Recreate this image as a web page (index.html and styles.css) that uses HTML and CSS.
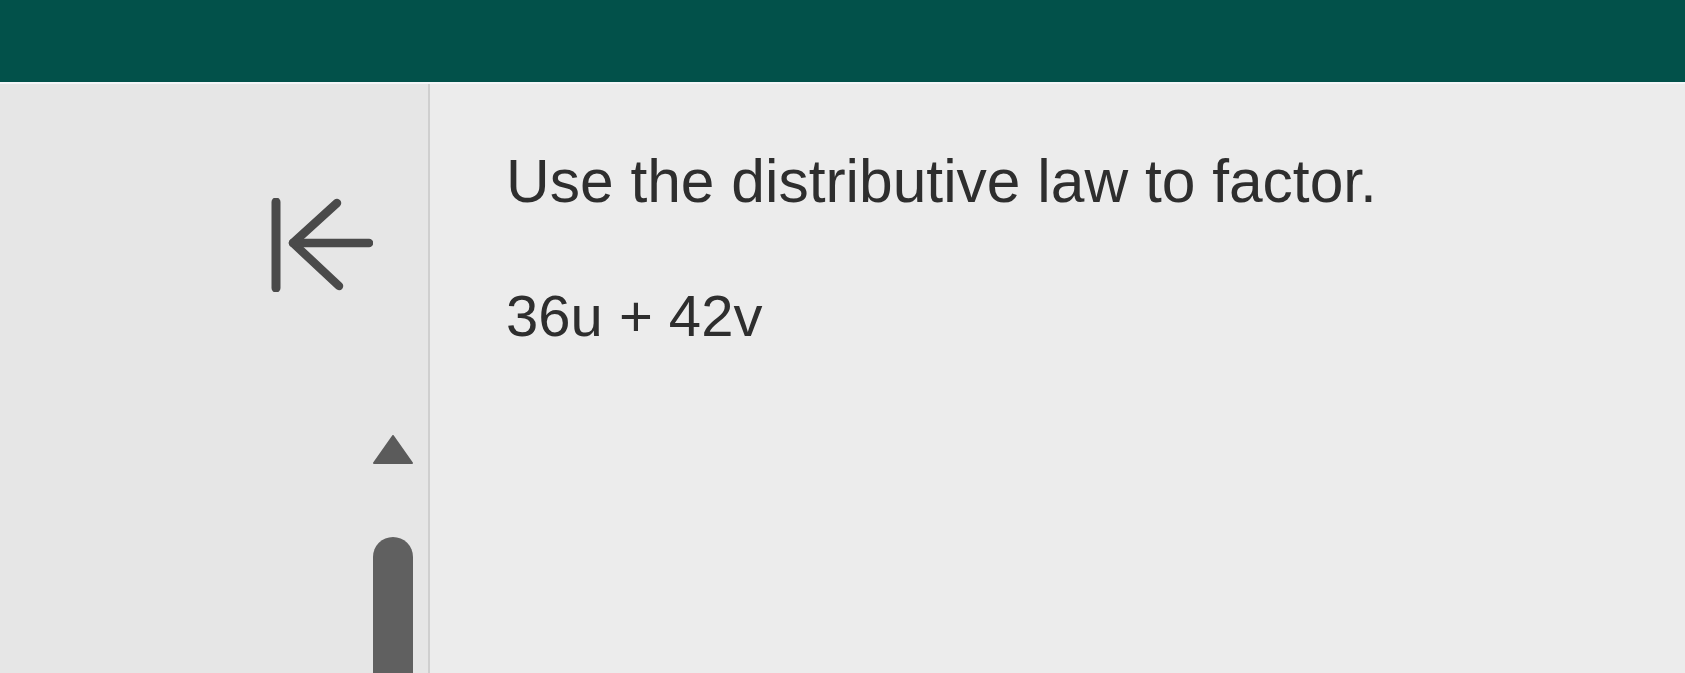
FILE: index.html
```html
<!DOCTYPE html>
<html>
<head>
<meta charset="utf-8">
<link rel="stylesheet" href="styles.css">
</head>
<body>
<div class="topbar"></div>
<div class="main">
  <aside class="sidebar">
    <svg class="collapse-icon" width="102" height="94" viewBox="0 0 102 94">
      <line x1="5" y1="4" x2="5" y2="90" stroke="#4a4a4a" stroke-width="9" stroke-linecap="round"/>
      <polyline points="66,5 22,45 68,88" fill="none" stroke="#4a4a4a" stroke-width="8.5" stroke-linecap="round" stroke-linejoin="round"/>
      <line x1="22" y1="45" x2="98" y2="45" stroke="#4a4a4a" stroke-width="8.5" stroke-linecap="round"/>
    </svg>
    <svg class="scroll-up" width="40" height="29" viewBox="0 0 40 29">
      <polygon points="20,1 39,28 1,28" fill="#5b5b5b" stroke="#5b5b5b" stroke-width="2" stroke-linejoin="round"/>
    </svg>
    <div class="thumb"></div>
  </aside>
  <section class="content">
    <div class="question">Use the distributive law to factor.</div>
    <div class="expr">36u + 42v</div>
  </section>
</div>
</body>
</html>
```
FILE: styles.css
```css
html, body {
  margin: 0;
  padding: 0;
  height: 100%;
  overflow: hidden;
}
body {
  background: #ebebeb;
  font-family: "Liberation Sans", Arial, sans-serif;
  color: #333333;
}
.topbar {
  height: 84px;
  background: #02514a;
  border-bottom: 2px solid #f4f6f8;
  box-sizing: border-box;
}
.main {
  display: flex;
  height: 589px;
}
.sidebar {
  width: 430px;
  flex: none;
  box-sizing: border-box;
  background: #e6e6e6;
  border-right: 2px solid #cfcfcf;
  display: flex;
  flex-direction: column;
  align-items: flex-end;
  padding-top: 114px;
  padding-right: 15px;
}
.collapse-icon {
  display: block;
  margin-right: 40px;
}
.scroll-up {
  display: block;
  margin-top: 143px;
}
.thumb {
  margin-top: 73px;
  width: 40px;
  flex: 1;
  background: #606060;
  border-radius: 20px 20px 0 0;
}
.content {
  flex: 1;
  background: #ececec;
  padding-left: 76px;
  padding-top: 67px;
}
.question {
  font-size: 60.5px;
  line-height: 60px;
  color: #2e2e2e;
}
.expr {
  margin-top: 76px;
  font-size: 58px;
  line-height: 58px;
  color: #2e2e2e;
}
```
